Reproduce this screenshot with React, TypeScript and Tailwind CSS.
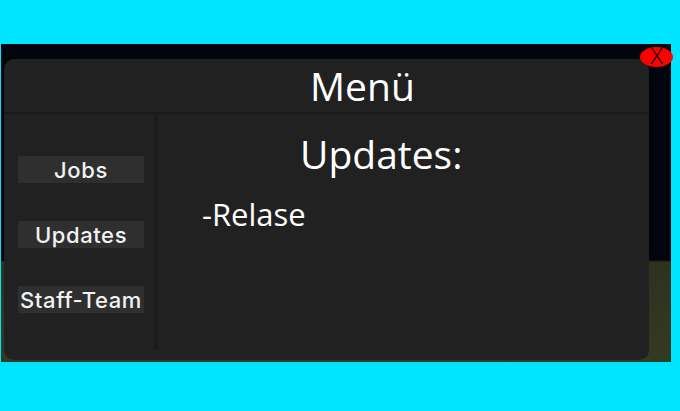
import React from "react";

const sans = { fontFamily: '"Open Sans", "Noto Sans", sans-serif' };

function SideButton({ label }: { label: string }) {
  return (
    <div className="w-[126px] h-[27px] bg-[#2f2f2f] flex items-center justify-center text-[22px] leading-none font-medium text-[#f2f2f2] font-['Inter',sans-serif] tracking-[0.6px] whitespace-nowrap">
      {label}
    </div>
  );
}

export default function App() {
  return (
    <div className="w-full h-[411px] bg-[#00e5ff] pt-[44px] pl-[1px] font-['Open_Sans',sans-serif]">
      <div className="relative w-[670px] h-[318px] bg-[linear-gradient(to_bottom,#02050d_0px,#02050d_216px,#2d321f_218px,#333a22_318px)] pt-[15px] pl-[3px]">
        <div className="w-[645px] h-[301px] bg-[#212121] rounded-[10px] flex flex-col">
          <div className="h-[55px] shrink-0 border-b-[2px] border-[#1b1b1b] flex items-center">
            <div className="ml-[306px] text-[39px] leading-none text-white" style={sans}>
              Menü
            </div>
          </div>
          <div className="flex flex-1">
            <div className="w-[150px] shrink-0 flex flex-col gap-[38px] pt-[42px] pl-[14px]">
              <SideButton label="Jobs" />
              <SideButton label="Updates" />
              <SideButton label="Staff-Team" />
            </div>
            <div className="w-[4px] h-[236px] bg-[#1b1b1b]" />
            <div className="flex-1 flex flex-col">
              <div className="ml-[142px] mt-[20px] text-[39px] leading-[40px] text-white" style={sans}>
                Updates:
              </div>
              <div className="ml-[44px] mt-[25px] text-[31px] leading-[31px] text-white" style={sans}>
                -Relase
              </div>
            </div>
          </div>
        </div>
        <div className="absolute left-[639px] top-[3px] w-[33px] h-[20px] rounded-[50%] bg-[#ff0000] flex items-center justify-center text-black text-[22px] leading-none font-['DejaVu_Sans',sans-serif] font-light">
          X
        </div>
      </div>
    </div>
  );
}
